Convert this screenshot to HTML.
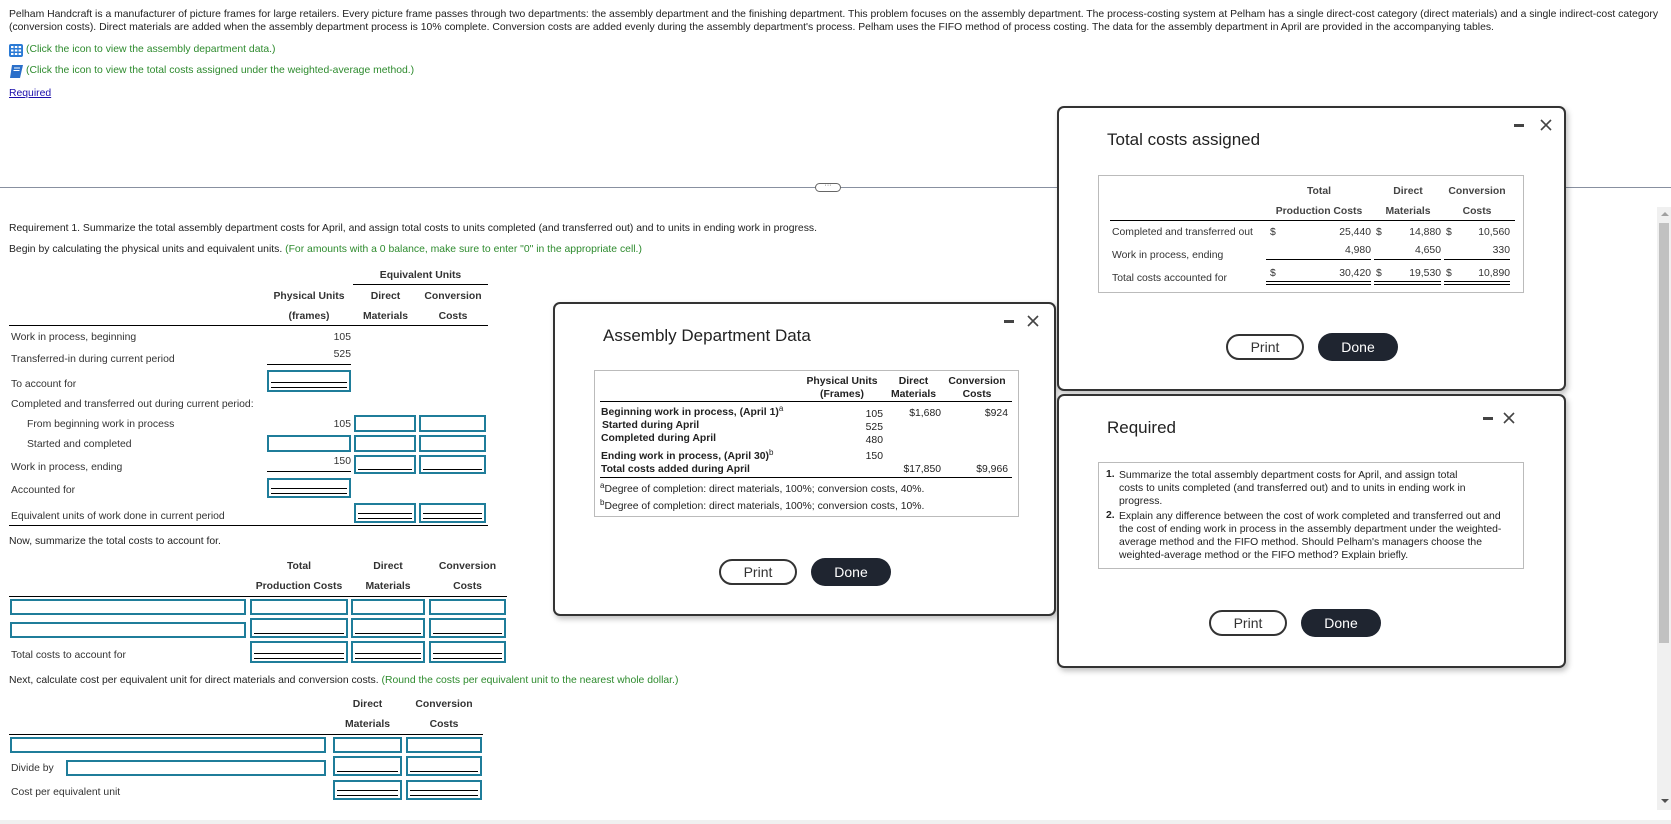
<!DOCTYPE html>
<html><head><meta charset="utf-8"><style>
*{box-sizing:border-box;margin:0;padding:0}
body{width:1671px;height:824px;position:relative;overflow:hidden;background:#fff;font-family:"Liberation Sans",Arial,sans-serif;font-size:10.4px;color:#333}
.a{position:absolute;white-space:nowrap}
.g{color:#2e8b2e}
.b{font-weight:bold}
.c{text-align:center}
.r{text-align:right}
.sp{font-size:8px;font-weight:normal;position:relative;top:-4px;line-height:0}
.in{position:absolute;border:2px solid #1f7d9a;background:#fff}
.in.s::after{content:"";position:absolute;left:2px;right:2px;bottom:2px;border-bottom:1.5px solid #000}
.in.d::after{content:"";position:absolute;left:2px;right:2px;bottom:2px;height:4px;border-top:1.5px solid #000;border-bottom:1.5px solid #000}
.ln{position:absolute;border-top:1.5px solid #000}
.dl{position:absolute;height:4px;border-top:1.5px solid #000;border-bottom:1.5px solid #000}
.dlg{position:absolute;border:2px solid #333;border-radius:7px;background:#fff;box-shadow:2px 3px 6px rgba(0,0,0,.25)}
.btn{position:absolute;border-radius:14px;font-size:14px;text-align:center;line-height:22px}
.pr{border:2px solid #333;color:#333;background:#fff}
.dn{background:#1f2530;color:#fff;line-height:28px}
.tb{position:absolute;border:1.5px solid #bbb;background:#fff}
.mn{position:absolute;width:10px;height:3px;background:#444}
.x{position:absolute}
</style></head><body>

<div class="a" style="left:9px;top:8px;color:#222;line-height:13px">Pelham Handcraft is a manufacturer of picture frames for large retailers. Every picture frame passes through two departments: the assembly department and the finishing department. This problem focuses on the assembly department. The process-costing system at Pelham has a single direct-cost category (direct materials) and a single indirect-cost category<br>(conversion costs). Direct materials are added when the assembly department process is 10% complete. Conversion costs are added evenly during the assembly department's process. Pelham uses the FIFO method of process costing. The data for the assembly department in April are provided in the accompanying tables.</div>

<svg class="a" style="left:9px;top:44px" width="14" height="13"><rect width="14" height="13" rx="2" fill="#2a7ad5"/><g fill="#fff"><rect x="2" y="2" width="2.5" height="2"/><rect x="5.8" y="2" width="2.5" height="2"/><rect x="9.6" y="2" width="2.5" height="2"/><rect x="2" y="5.5" width="2.5" height="2"/><rect x="5.8" y="5.5" width="2.5" height="2"/><rect x="9.6" y="5.5" width="2.5" height="2"/><rect x="2" y="9" width="2.5" height="2"/><rect x="5.8" y="9" width="2.5" height="2"/><rect x="9.6" y="9" width="2.5" height="2"/></g></svg>
<div class="a g" style="left:26px;top:44px">(Click the icon to view the assembly department data.)</div>
<svg class="a" style="left:9px;top:64px" width="15" height="15"><path d="M3 1h11l-3 13H1z" fill="#2a6fc9"/><path d="M5 4h6M4.5 6.5h6" stroke="#fff" stroke-width="1"/></svg>
<div class="a g" style="left:26px;top:65px">(Click the icon to view the total costs assigned under the weighted-average method.)</div>
<div class="a" style="left:9px;top:88px;color:#1a0dab;text-decoration:underline">Required</div>

<div class="ln" style="left:0;top:187px;width:1671px;border-top:1.5px solid #8890a0"></div>
<div class="a" style="left:815px;top:183px;width:26px;height:9px;border:1px solid #666;border-radius:5px;background:#fff;font-size:7px;line-height:4px;text-align:center;color:#444">···</div>

<div class="a" style="left:9px;top:223px;color:#222">Requirement 1. Summarize the total assembly department costs for April, and assign total costs to units completed (and transferred out) and to units in ending work in progress.</div>
<div class="a" style="left:9px;top:244px;color:#222">Begin by calculating the physical units and equivalent units. <span class="g">(For amounts with a 0 balance, make sure to enter "0" in the appropriate cell.)</span></div>

<div class="a b c" style="left:353px;top:270px;width:135px">Equivalent Units</div>
<div class="ln" style="left:353px;top:284px;width:135px"></div>
<div class="a b c" style="left:262px;top:291px;width:94px">Physical Units</div>
<div class="a b c" style="left:353px;top:291px;width:65px">Direct</div>
<div class="a b c" style="left:419px;top:291px;width:68px">Conversion</div>
<div class="a b c" style="left:267px;top:311px;width:84px">(frames)</div>
<div class="a b c" style="left:353px;top:311px;width:65px">Materials</div>
<div class="a b c" style="left:419px;top:311px;width:68px">Costs</div>
<div class="ln" style="left:9px;top:325px;width:479px"></div>

<div class="a" style="left:11px;top:332px">Work in process, beginning</div><div class="a r" style="left:300px;top:332px;width:51px">105</div>
<div class="a" style="left:11px;top:354px">Transferred-in during current period</div><div class="a r" style="left:300px;top:349px;width:51px">525</div>
<div class="ln" style="left:267px;top:364px;width:84px"></div>
<div class="a" style="left:11px;top:379px">To account for</div><div class="in d" style="left:267px;top:370px;width:84px;height:22px"></div>
<div class="a" style="left:11px;top:399px">Completed and transferred out during current period:</div>
<div class="a" style="left:27px;top:419px">From beginning work in process</div><div class="a r" style="left:300px;top:419px;width:51px">105</div>
<div class="in" style="left:354px;top:415px;width:62px;height:17px"></div><div class="in" style="left:419px;top:415px;width:67px;height:17px"></div>
<div class="a" style="left:27px;top:439px">Started and completed</div>
<div class="in" style="left:267px;top:435px;width:84px;height:17px"></div><div class="in" style="left:354px;top:435px;width:62px;height:17px"></div><div class="in" style="left:419px;top:435px;width:67px;height:17px"></div>
<div class="a" style="left:11px;top:462px">Work in process, ending</div><div class="a r" style="left:300px;top:456px;width:51px">150</div>
<div class="ln" style="left:267px;top:471px;width:84px"></div>
<div class="in s" style="left:354px;top:455px;width:62px;height:19px"></div><div class="in s" style="left:419px;top:455px;width:67px;height:19px"></div>
<div class="a" style="left:11px;top:485px">Accounted for</div><div class="in d" style="left:267px;top:478px;width:84px;height:20px"></div>
<div class="a" style="left:11px;top:511px">Equivalent units of work done in current period</div>
<div class="in d" style="left:354px;top:503px;width:62px;height:20px"></div><div class="in d" style="left:419px;top:503px;width:67px;height:20px"></div>
<div class="ln" style="left:9px;top:525px;width:479px"></div>

<div class="a" style="left:9px;top:536px;color:#222">Now, summarize the total costs to account for.</div>
<div class="a b c" style="left:250px;top:561px;width:98px">Total</div>
<div class="a b c" style="left:351px;top:561px;width:74px">Direct</div>
<div class="a b c" style="left:429px;top:561px;width:77px">Conversion</div>
<div class="a b c" style="left:240px;top:581px;width:118px">Production Costs</div>
<div class="a b c" style="left:351px;top:581px;width:74px">Materials</div>
<div class="a b c" style="left:429px;top:581px;width:77px">Costs</div>
<div class="ln" style="left:9px;top:596px;width:498px"></div>
<div class="in" style="left:10px;top:599px;width:236px;height:16px"></div><div class="in" style="left:250px;top:599px;width:98px;height:16px"></div><div class="in" style="left:351px;top:599px;width:74px;height:16px"></div><div class="in" style="left:429px;top:599px;width:77px;height:16px"></div>
<div class="in" style="left:10px;top:622px;width:236px;height:16px"></div><div class="in s" style="left:250px;top:618px;width:98px;height:20px"></div><div class="in s" style="left:351px;top:618px;width:74px;height:20px"></div><div class="in s" style="left:429px;top:618px;width:77px;height:20px"></div>
<div class="a" style="left:11px;top:650px">Total costs to account for</div>
<div class="in d" style="left:250px;top:641px;width:98px;height:22px"></div><div class="in d" style="left:351px;top:641px;width:74px;height:22px"></div><div class="in d" style="left:429px;top:641px;width:77px;height:22px"></div>

<div class="a" style="left:9px;top:675px;color:#222">Next, calculate cost per equivalent unit for direct materials and conversion costs. <span class="g">(Round the costs per equivalent unit to the nearest whole dollar.)</span></div>
<div class="a b c" style="left:333px;top:699px;width:69px">Direct</div>
<div class="a b c" style="left:406px;top:699px;width:76px">Conversion</div>
<div class="a b c" style="left:333px;top:719px;width:69px">Materials</div>
<div class="a b c" style="left:406px;top:719px;width:76px">Costs</div>
<div class="ln" style="left:9px;top:734px;width:474px"></div>
<div class="in" style="left:10px;top:737px;width:316px;height:16px"></div><div class="in" style="left:333px;top:737px;width:69px;height:16px"></div><div class="in" style="left:406px;top:737px;width:76px;height:16px"></div>
<div class="a" style="left:11px;top:763px">Divide by</div>
<div class="in" style="left:66px;top:760px;width:260px;height:16px"></div><div class="in s" style="left:333px;top:756px;width:69px;height:20px"></div><div class="in s" style="left:406px;top:756px;width:76px;height:20px"></div>
<div class="a" style="left:11px;top:787px">Cost per equivalent unit</div>
<div class="in d" style="left:333px;top:780px;width:69px;height:20px"></div><div class="in d" style="left:406px;top:780px;width:76px;height:20px"></div>

<div class="a" style="left:0;top:820px;width:1671px;height:4px;background:#f0f0f0"></div>
<div class="a" style="left:1657px;top:207px;width:14px;height:603px;background:#f0f0f0"></div>
<div class="a" style="left:1659px;top:223px;width:10px;height:420px;background:#c1c1c1"></div>
<div class="a" style="left:1661px;top:212px;width:0;height:0;border-left:4px solid transparent;border-right:4px solid transparent;border-bottom:4px solid #a0a0a0"></div>
<div class="a" style="left:1661px;top:799px;width:0;height:0;border-left:4px solid transparent;border-right:4px solid transparent;border-top:4px solid #505050"></div>

<!-- Dialog 1 -->
<div class="dlg" style="left:553px;top:302px;width:503px;height:314px"></div>
<div class="a" style="left:603px;top:326px;font-size:17px;color:#222">Assembly Department Data</div>
<div class="mn" style="left:1004px;top:320px"></div>
<svg class="x" style="left:1027px;top:315px" width="12" height="12"><path d="M1 1L11 11M11 1L1 11" stroke="#444" stroke-width="1.6"/></svg>
<div class="tb" style="left:594px;top:370px;width:425px;height:147px"></div>
<div class="a b c" style="left:795px;top:375px;width:94px;color:#222;line-height:13px">Physical Units<br>(Frames)</div>
<div class="a b c" style="left:882px;top:375px;width:63px;color:#222;line-height:13px">Direct<br>Materials</div>
<div class="a b c" style="left:942px;top:375px;width:70px;color:#222;line-height:13px">Conversion<br>Costs</div>
<div class="ln" style="left:600px;top:401px;width:412px"></div>
<div class="a b" style="left:601px;top:407px;color:#222">Beginning work in process, (April 1)<span class="sp">a</span></div>
<div class="a b" style="left:602px;top:420px;color:#222">Started during April</div>
<div class="a b" style="left:601px;top:433px;color:#222">Completed during April</div>
<div class="a b" style="left:601px;top:451px;color:#222">Ending work in process, (April 30)<span class="sp">b</span></div>
<div class="a b" style="left:601px;top:464px;color:#222">Total costs added during April</div>
<div class="a r" style="left:840px;top:408px;width:43px;color:#222;line-height:13px">105<br>525<br>480</div>
<div class="a r" style="left:840px;top:451px;width:43px;color:#222">150</div>
<div class="a r" style="left:890px;top:408px;width:51px;color:#222">$1,680</div>
<div class="a r" style="left:960px;top:408px;width:48px;color:#222">$924</div>
<div class="a r" style="left:890px;top:464px;width:51px;color:#222">$17,850</div>
<div class="a r" style="left:960px;top:464px;width:48px;color:#222">$9,966</div>
<div class="ln" style="left:600px;top:477px;width:412px"></div>
<div class="a" style="left:600px;top:484px;color:#222"><span class="sp">a</span>Degree of completion: direct materials, 100%; conversion costs, 40%.</div>
<div class="a" style="left:600px;top:501px;color:#222"><span class="sp">b</span>Degree of completion: direct materials, 100%; conversion costs, 10%.</div>
<div class="btn pr" style="left:719px;top:559px;width:78px;height:26px">Print</div>
<div class="btn dn" style="left:811px;top:558px;width:80px;height:28px">Done</div>

<!-- Dialog 2 -->
<div class="dlg" style="left:1057px;top:106px;width:509px;height:285px"></div>
<div class="a" style="left:1107px;top:130px;font-size:17px;color:#222">Total costs assigned</div>
<div class="mn" style="left:1514px;top:124px"></div>
<svg class="x" style="left:1540px;top:119px" width="12" height="12"><path d="M1 1L11 11M11 1L1 11" stroke="#444" stroke-width="1.6"/></svg>
<div class="tb" style="left:1098px;top:175px;width:426px;height:118px"></div>
<div class="a b c" style="left:1261px;top:186px;width:116px;color:#444">Total</div>
<div class="a b c" style="left:1370px;top:186px;width:76px;color:#444">Direct</div>
<div class="a b c" style="left:1440px;top:186px;width:74px;color:#444">Conversion</div>
<div class="a b c" style="left:1261px;top:206px;width:116px;color:#444">Production Costs</div>
<div class="a b c" style="left:1370px;top:206px;width:76px;color:#444">Materials</div>
<div class="a b c" style="left:1440px;top:206px;width:74px;color:#444">Costs</div>
<div class="ln" style="left:1110px;top:220px;width:405px"></div>
<div class="a" style="left:1112px;top:227px">Completed and transferred out</div>
<div class="a" style="left:1112px;top:250px">Work in process, ending</div>
<div class="a" style="left:1112px;top:273px">Total costs accounted for</div>
<div class="a" style="left:1270px;top:227px">$</div><div class="a r" style="left:1300px;top:227px;width:71px">25,440</div><div class="a" style="left:1376px;top:227px">$</div><div class="a r" style="left:1390px;top:227px;width:51px">14,880</div><div class="a" style="left:1446px;top:227px">$</div><div class="a r" style="left:1460px;top:227px;width:50px">10,560</div>
<div class="a r" style="left:1300px;top:245px;width:71px">4,980</div><div class="a r" style="left:1390px;top:245px;width:51px">4,650</div><div class="a r" style="left:1460px;top:245px;width:50px">330</div>
<div class="ln" style="left:1266px;top:259px;width:105px"></div><div class="ln" style="left:1374px;top:259px;width:67px"></div><div class="ln" style="left:1444px;top:259px;width:66px"></div>
<div class="a" style="left:1270px;top:268px">$</div><div class="a r" style="left:1300px;top:268px;width:71px">30,420</div><div class="a" style="left:1376px;top:268px">$</div><div class="a r" style="left:1390px;top:268px;width:51px">19,530</div><div class="a" style="left:1446px;top:268px">$</div><div class="a r" style="left:1460px;top:268px;width:50px">10,890</div>
<div class="dl" style="left:1266px;top:281px;width:105px"></div><div class="dl" style="left:1374px;top:281px;width:67px"></div><div class="dl" style="left:1444px;top:281px;width:66px"></div>
<div class="btn pr" style="left:1226px;top:334px;width:78px;height:26px">Print</div>
<div class="btn dn" style="left:1318px;top:333px;width:80px;height:28px">Done</div>

<!-- Dialog 3 -->
<div class="dlg" style="left:1057px;top:394px;width:509px;height:274px"></div>
<div class="a" style="left:1107px;top:418px;font-size:17px;color:#222">Required</div>
<div class="mn" style="left:1483px;top:417px"></div>
<svg class="x" style="left:1503px;top:412px" width="12" height="12"><path d="M1 1L11 11M11 1L1 11" stroke="#444" stroke-width="1.6"/></svg>
<div class="tb" style="left:1098px;top:462px;width:426px;height:107px"></div>
<div class="a b" style="left:1106px;top:469px;color:#222">1.</div>
<div class="a" style="left:1119px;top:469px;color:#222;line-height:13px;white-space:normal;width:352px">Summarize the total assembly department costs for April, and assign total costs to units completed (and transferred out) and to units in ending work in progress.</div>
<div class="a b" style="left:1106px;top:510px;color:#222">2.</div>
<div class="a" style="left:1119px;top:510px;color:#222;line-height:13px;white-space:normal;width:390px">Explain any difference between the cost of work completed and transferred out and the cost of ending work in process in the assembly department under the weighted-average method and the FIFO method. Should Pelham's managers choose the weighted-average method or the FIFO method? Explain briefly.</div>
<div class="btn pr" style="left:1209px;top:610px;width:78px;height:26px">Print</div>
<div class="btn dn" style="left:1301px;top:609px;width:80px;height:28px">Done</div>
</body></html>
